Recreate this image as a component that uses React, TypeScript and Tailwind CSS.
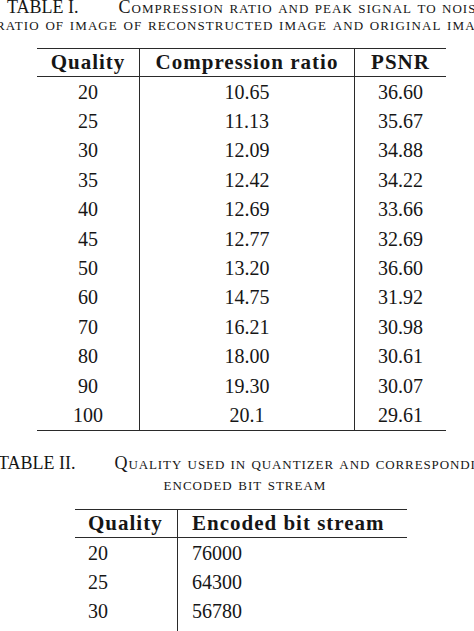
import React from 'react';

// Table data
const tableOne: [string, string, string][] = [
  ['20', '10.65', '36.60'],
  ['25', '11.13', '35.67'],
  ['30', '12.09', '34.88'],
  ['35', '12.42', '34.22'],
  ['40', '12.69', '33.66'],
  ['45', '12.77', '32.69'],
  ['50', '13.20', '36.60'],
  ['60', '14.75', '31.92'],
  ['70', '16.21', '30.98'],
  ['80', '18.00', '30.61'],
  ['90', '19.30', '30.07'],
  ['100', '20.1', '29.61'],
];

const tableTwo: [string, string][] = [
  ['20', '76000'],
  ['25', '64300'],
  ['30', '56780'],
];

const head = "[font-family:'Liberation_Serif',serif] font-bold text-[21px] tracking-[1px] leading-none";
const cell = "[font-family:'Liberation_Serif',serif] text-[20px] leading-none";

export default function App() {
  return (
    <div className="w-[474px] h-[631px] overflow-hidden bg-white text-[#161616] [font-family:'Liberation_Serif',serif] flex flex-col">
      {/* Table I caption */}
      <div className="h-[14px] leading-[14px] text-[18px] whitespace-nowrap pl-[7px]">
        <span>TABLE I.</span>
        <span className="ml-[40px] [font-variant:small-caps] tracking-[1px]">
          Compression ratio and peak signal to noise
        </span>
      </div>
      <div className="mt-[1px] h-[18px] leading-[18px] text-[18px] whitespace-nowrap ml-[-4px] [font-variant:small-caps] tracking-[1.1px]">
        ratio of image of reconstructed image and original image.
      </div>

      {/* Table I */}
      <div className="mt-[15px] ml-[37px] w-[409px] border-t-[1.5px] border-b-[1.5px] border-[#2a2a2a]">
        <div className="flex h-[28px] border-b-[1.5px] border-[#2a2a2a]">
          <div className={`w-[102px] flex items-center justify-center ${head}`}>Quality</div>
          <div className={`w-[215px] flex items-center justify-center border-l-[1.5px] border-[#2a2a2a] ${head}`}>
            Compression ratio
          </div>
          <div className={`flex-1 flex items-center justify-center border-l-[1.5px] border-[#2a2a2a] ${head}`}>PSNR</div>
        </div>
        {tableOne.map(([q, c, p]) => (
          <div key={q} className={`flex h-[29.4px] ${cell}`}>
            <div className="w-[102px] flex items-center justify-center">{q}</div>
            <div className="w-[215px] flex items-center justify-center border-l-[1.5px] border-[#2a2a2a]">{c}</div>
            <div className="flex-1 flex items-center justify-center border-l-[1.5px] border-[#2a2a2a]">{p}</div>
          </div>
        ))}
      </div>

      {/* Table II caption */}
      <div className="mt-[25.5px] h-[14px] leading-[14px] text-[18px] whitespace-nowrap ml-[-2px]">
        <span>TABLE II.</span>
        <span className="ml-[39px] [font-variant:small-caps] tracking-[0.9px]">
          Quality used in quantizer and corresponding
        </span>
      </div>
      <div className="mt-[1px] h-[26px] leading-[26px] text-[18px] whitespace-nowrap pl-[16px] text-center [font-variant:small-caps] tracking-[1px]">
        encoded bit stream
      </div>

      {/* Table II */}
      <div className="mt-[12px] ml-[75px] w-[332px] border-t-[1.5px] border-[#2a2a2a] flex-1 flex flex-col">
        <div className="flex h-[28px] border-b-[1.5px] border-[#2a2a2a]">
          <div className={`w-[102px] flex items-center pl-[13px] ${head}`}>Quality</div>
          <div className={`flex-1 flex items-center pl-[14px] border-l-[1.5px] border-[#2a2a2a] ${head}`}>
            Encoded bit stream
          </div>
        </div>
        {tableTwo.map(([q, b]) => (
          <div key={q} className={`flex h-[29.3px] ${cell}`}>
            <div className="w-[102px] flex items-center pl-[13px]">{q}</div>
            <div className="flex-1 flex items-center pl-[14px] border-l-[1.5px] border-[#2a2a2a]">{b}</div>
          </div>
        ))}
        <div className="flex flex-1">
          <div className="w-[102px]" />
          <div className="flex-1 border-l-[1.5px] border-[#2a2a2a]" />
        </div>
      </div>
    </div>
  );
}
